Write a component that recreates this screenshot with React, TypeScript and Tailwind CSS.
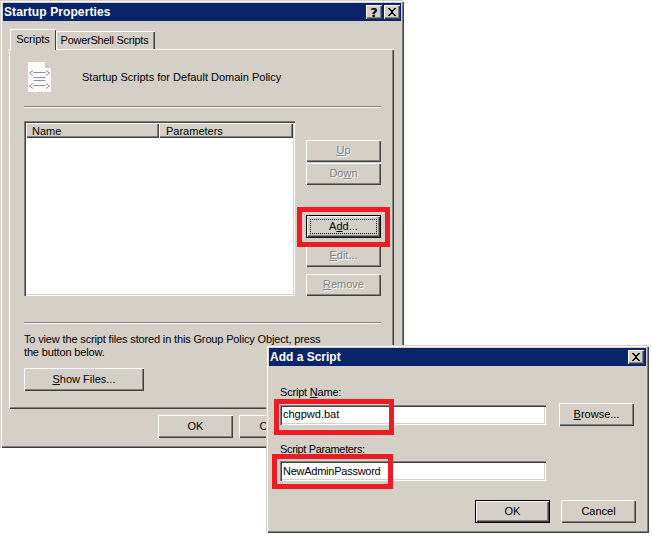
import React from "react";

const raised = "bg-[#d4d0c8] shadow-[inset_1px_1px_0_#ffffff,inset_-1px_-1px_0_#404040,inset_-2px_-2px_0_#808080]";
const win = "bg-[#d4d0c8] shadow-[inset_1px_1px_0_#d4d0c8,inset_2px_2px_0_#ffffff,inset_-1px_-1px_0_#404040,inset_-2px_-2px_0_#808080]";
const sunken = "shadow-[inset_1px_1px_0_#808080,inset_2px_2px_0_#404040,inset_-1px_-1px_0_#ffffff,inset_-2px_-2px_0_#d4d0c8]";
const disabled = "text-[#808080] [text-shadow:1px_1px_0_#ffffff]";

function Btn({ children, className = "h-[23px]", off = false }: { children: React.ReactNode; className?: string; off?: boolean }) {
  return (
    <div className={`${raised} w-[75px] flex items-center justify-center pb-px ${off ? disabled : "text-black"} ${className}`}>
      {children}
    </div>
  );
}

function Sep({ className = "" }: { className?: string }) {
  return <div className={`h-[2px] border-t border-t-[#808080] border-b border-b-white ${className}`} />;
}

function TitleBtn({ children }: { children: React.ReactNode }) {
  return (
    <div className={`${raised} w-[16px] h-[14px] flex items-center justify-center`}>{children}</div>
  );
}

const X = () => (
  <svg width="10" height="8" viewBox="0 0 10 8" shapeRendering="crispEdges" className="block">
    <path d="M1 0h2v1h1v1h2V1h1V0h2v1H8v1H7v1H6v2h1v1h1v1h1v1H7V7H6V6H4v1H3v1H1V7h1V6h1V5h1V3H3V2H2V1H1z" fill="#000" />
  </svg>
);

function DocIcon() {
  const c = "#8e8aa8";
  return (
    <svg width="24" height="30" viewBox="0 0 24 30" className="block">
      <path d="M0 0h17l6 6v24H0z" fill="#fbfbf8" />
      <path d="M17 0l6 6h-6z" fill="#c9c7c2" />
      <g stroke={c} strokeWidth="1" fill="none">
        <path d="M5 8.500l-3.500 2.500 3.500 2.500M18 8.500l3.500 2.500-3.500 2.500M5.500 10.500h12" />
        <path d="M5.500 15.500h12M5.500 18.500h12" />
        <path d="M5 21.500l-3.500 2.500 3.500 2.500M18 21.500l3.500 2.500-3.500 2.500M5.500 23.500h12" />
      </g>
    </svg>
  );
}

export default function App() {
  return (
    <div className="relative w-[652px] h-[536px] bg-white overflow-hidden text-[11px] leading-[13px] text-black font-['Liberation_Sans',Arial,sans-serif]">
      {/* Startup Properties */}
      <div className={`${win} absolute left-0 top-0 w-[404px] h-[448px] p-[3px]`}>
        <div className="h-[18px] bg-[#0a246a] flex items-center justify-between pl-[1px] pr-[1px]">
          <span className="font-bold text-white text-[12px] tracking-[0.1px]">Startup Properties</span>
          <div className="flex gap-[2px]">
            <TitleBtn><span className="font-bold text-[13px] leading-none font-['DejaVu_Sans',sans-serif]">?</span></TitleBtn>
            <TitleBtn><X /></TitleBtn>
          </div>
        </div>

        <div className="pt-[8px] pl-[6px]">
          <div className="flex items-end h-[20px] pl-[1px]">
            <div className="relative z-10 -mb-px h-[21px] w-[46px] bg-[#d4d0c8] shadow-[inset_1px_1px_0_#ffffff,inset_-1px_0_0_#404040] flex justify-center pt-[4px]">Scripts</div>
            <div className="h-[18px] w-[99px] pt-px pr-[2px] shadow-[inset_1px_1px_0_#ffffff,inset_-1px_0_0_#404040,inset_-2px_0_0_#808080] flex justify-center items-center tracking-[-0.25px]">PowerShell Scripts</div>
          </div>

          <div className={`${raised} w-[385px] h-[360px] pl-[15px] pr-[13px]`}>
            <div className="flex items-center pt-[13px] pl-[4px] h-[43px]">
              <DocIcon />
              <span className="ml-[30px]">Startup Scripts for Default Domain Policy</span>
            </div>
            <Sep className="mt-[14px]" />

            <div className="flex mt-[13px] gap-[11px]">
              <div className={`w-[271px] h-[175px] bg-white p-[2px] ${sunken}`}>
                <div className="flex h-[15px]">
                  <div className={`${raised} w-[133px] pl-[6px] pt-px flex items-center`}>Name</div>
                  <div className={`${raised} flex-1 pl-[7px] pt-px flex items-center`}>Parameters</div>
                </div>
              </div>
              <div className="flex flex-col pt-[19px] h-[175px]">
                <Btn off className="h-[22px]"><span><u>U</u>p</span></Btn>
                <Btn off className="mt-px h-[22px]"><span>Do<u>w</u>n</span></Btn>
                <div className="mt-[30px] w-[75px] h-[23px] bg-black p-px">
                  <div className={`${raised} w-full h-full p-[3px]`}>
                    <div className="w-full h-full border border-dotted border-black flex items-center justify-center pb-px">
                      <span>A<u>d</u>d...</span>
                    </div>
                  </div>
                </div>
                <Btn off className="mt-[7px] h-[22px]"><span><u>E</u>dit...</span></Btn>
                <Btn off className="mt-[7px] h-[22px]"><span><u>R</u>emove</span></Btn>
              </div>
            </div>

            <Sep className="mt-[26px]" />
            <p className="mt-[9px] w-[300px] tracking-[-0.15px]">To view the script files stored in this Group Policy Object, press the button below.</p>
            <Btn className="mt-[9px] !w-[120px] h-[23px]"><span><u>S</u>how Files...</span></Btn>
          </div>

          <div className="flex gap-[6px] mt-[6px] pl-[149px]">
            <Btn>OK</Btn>
            <Btn>Cancel</Btn>
          </div>
        </div>
      </div>

      {/* Add a Script */}
      <div className={`${win} absolute left-[266px] top-[345px] w-[383px] h-[188px] p-[3px]`}>
        <div className="h-[18px] bg-[#0a246a] flex items-center justify-between pl-[1px] pr-[2px]">
          <span className="font-bold text-white text-[12px]">Add a Script</span>
          <TitleBtn><X /></TitleBtn>
        </div>
        <div className="pl-[11px]">
          <div className="mt-[20px] h-[13px] tracking-[-0.2px]"><span>Script <u>N</u>ame:</span></div>
          <div className="flex items-center mt-[4px] gap-[13px]">
            <div className={`w-[266px] h-[20px] bg-white pl-[3px] flex items-center ${sunken}`}>chgpwd.bat</div>
            <Btn><span><u>B</u>rowse...</span></Btn>
          </div>
          <div className="mt-[17px] h-[13px] tracking-[-0.35px]">Script Parameters:</div>
          <div className={`mt-[5px] w-[266px] h-[20px] bg-white pl-[3px] flex items-center tracking-[-0.25px] ${sunken}`}>NewAdminPassword</div>
          <div className="flex mt-[19px] pl-[195px] gap-[11px]">
            <div className="w-[75px] h-[23px] bg-black p-px">
              <div className={`${raised} w-full h-full flex items-center justify-center pb-px`}>OK</div>
            </div>
            <Btn>Cancel</Btn>
          </div>
        </div>
      </div>

      {/* Red highlight boxes */}
      <div className="absolute left-[297px] top-[207px] w-[93px] h-[40px] border-[5px] border-[#ed1c24] pointer-events-none" />
      <div className="absolute left-[274px] top-[399px] w-[120px] h-[36px] border-[5px] border-[#ed1c24] pointer-events-none" />
      <div className="absolute left-[272px] top-[454px] w-[121px] h-[35px] border-[5px] border-[#ed1c24] pointer-events-none" />
    </div>
  );
}
